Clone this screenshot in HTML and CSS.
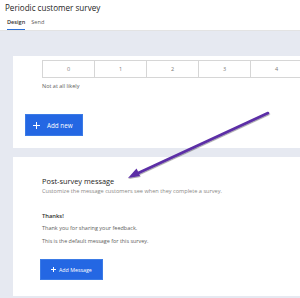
FILE: index.html
```html
<!DOCTYPE html>
<html>
<head>
<meta charset="utf-8">
<link rel="stylesheet" href="styles.css">
</head>
<body>
<div class="page">
  <header class="header">
    <h1 class="title">Periodic customer survey</h1>
    <nav class="tabs">
      <span class="tab active">Design</span>
      <span class="tab">Send</span>
    </nav>
  </header>
  <main class="main">
    <section class="card card-scale">
      <div class="scale">
        <div class="cell">0</div>
        <div class="cell">1</div>
        <div class="cell">2</div>
        <div class="cell">3</div>
        <div class="cell">4</div>
      </div>
      <div class="scale-label">Not at all likely</div>
      <button class="btn btn-large"><span class="plus plus-large"></span>Add new</button>
    </section>
    <section class="card card-msg">
      <h2 class="msg-title">Post-survey message</h2>
      <p class="msg-sub">Customize the message customers see when they complete a survey.</p>
      <p class="msg-thanks">Thanks!</p>
      <p class="msg-text">Thank you for sharing your feedback.</p>
      <p class="msg-note">This is the default message for this survey.</p>
      <button class="btn btn-small"><span class="plus plus-small"></span>Add Message</button>
    </section>
  </main>
  <svg class="annot" width="300" height="298" viewBox="0 0 300 298">
    <defs>
      <filter id="sh" x="-10%" y="-10%" width="120%" height="130%">
        <feDropShadow dx="0.5" dy="1" stdDeviation="0.6" flood-color="#000" flood-opacity="0.35"/>
      </filter>
    </defs>
    <g filter="url(#sh)">
      <line x1="268" y1="113" x2="135" y2="174.5" stroke="#5b2ea6" stroke-width="2.6" stroke-linecap="round"/>
      <polygon points="128,178 136.5,168.5 140,176" fill="#5b2ea6"/>
    </g>
  </svg>
</div>
</body>
</html>
```
FILE: styles.css
```css
* { box-sizing: border-box; }
html, body { margin: 0; padding: 0; }
body {
  width: 300px;
  height: 298px;
  overflow: hidden;
  font-family: "Open Sans", "Noto Sans", sans-serif;
  color: #323130;
  background: #e6e9f1;
}
.page { position: relative; width: 300px; height: 298px; overflow: hidden; }
.header {
  background: #fff;
  height: 31px;
  padding: 2px 0 0 5px;
  border-bottom: 1px solid #e3e3e3;
}
.title {
  margin: 0;
  font-size: 8.1px;
  font-weight: 400;
  line-height: 12px;
  color: #252423;
}
.tabs {
  display: flex;
  gap: 6px;
  margin-top: 4px;
  padding-left: 2px;
}
.tab {
  font-size: 5.6px;
  line-height: 8px;
  color: #605e5c;
  padding-bottom: 3px;
  border-bottom: 1.5px solid transparent;
}
.tab.active {
  color: #323130;
  font-weight: 600;
  border-bottom-color: #2b6fd6;
}
.main {
  padding: 25px 0 0 13px;
  display: flex;
  flex-direction: column;
  gap: 9px;
}
.card {
  background: #fff;
  width: 300px;
}
.card-scale {
  height: 92px;
  padding: 4px 0 0 29px;
  overflow: hidden;
}
.scale {
  display: flex;
  width: 330px;
}
.cell {
  flex: 0 0 53px;
  height: 18px;
  border: 1px solid #d6d6d6;
  margin-left: -1px;
  display: flex;
  align-items: center;
  justify-content: center;
  font-size: 5.5px;
  color: #7a7876;
}
.cell:first-child { margin-left: 0; }
.scale-label {
  margin-top: 4px;
  font-size: 5.5px;
  line-height: 8px;
  color: #605e5c;
}
.btn {
  display: flex;
  align-items: center;
  border: 1px solid #3b7be6;
  background: #2467e3;
  color: #fff;
  font-family: "Open Sans", "Noto Sans", sans-serif;
  padding: 0;
  cursor: pointer;
}
.btn-large {
  margin: 24px 0 0 -17px;
  width: 58px;
  height: 22px;
  font-size: 6.3px;
  padding-left: 7px;
  gap: 7px;
}
.plus { position: relative; display: inline-block; }
.plus::before, .plus::after {
  content: "";
  position: absolute;
  background: #fff;
}
.plus-large { width: 7px; height: 7px; }
.plus-large::before { left: 3px; top: 0; width: 1px; height: 7px; }
.plus-large::after { left: 0; top: 3px; width: 7px; height: 1px; }
.plus-small { width: 5px; height: 5px; }
.plus-small::before { left: 2px; top: 0; width: 1px; height: 5px; }
.plus-small::after { left: 0; top: 2px; width: 5px; height: 1px; }
.card-msg {
  height: 139px;
  padding: 19px 0 0 29px;
}
.msg-title {
  margin: 0;
  font-size: 7.4px;
  font-weight: 400;
  line-height: 11px;
  color: #252423;
}
.msg-sub {
  margin: 0;
  font-size: 5.6px;
  line-height: 8px;
  color: #8a8886;
}
.msg-thanks {
  margin: 17px 0 0;
  font-size: 5.8px;
  font-weight: 600;
  line-height: 8px;
  color: #323130;
}
.msg-text {
  margin: 4px 0 0;
  font-size: 5.5px;
  line-height: 8px;
  color: #605e5c;
}
.msg-note {
  margin: 5px 0 0;
  font-size: 5.4px;
  line-height: 8px;
  color: #605e5c;
}
.btn-small {
  margin: 14px 0 0 -2px;
  width: 63px;
  height: 21px;
  font-size: 5.3px;
  padding-left: 10px;
  gap: 3px;
}
.annot {
  position: absolute;
  left: 0;
  top: 0;
  pointer-events: none;
}
```
